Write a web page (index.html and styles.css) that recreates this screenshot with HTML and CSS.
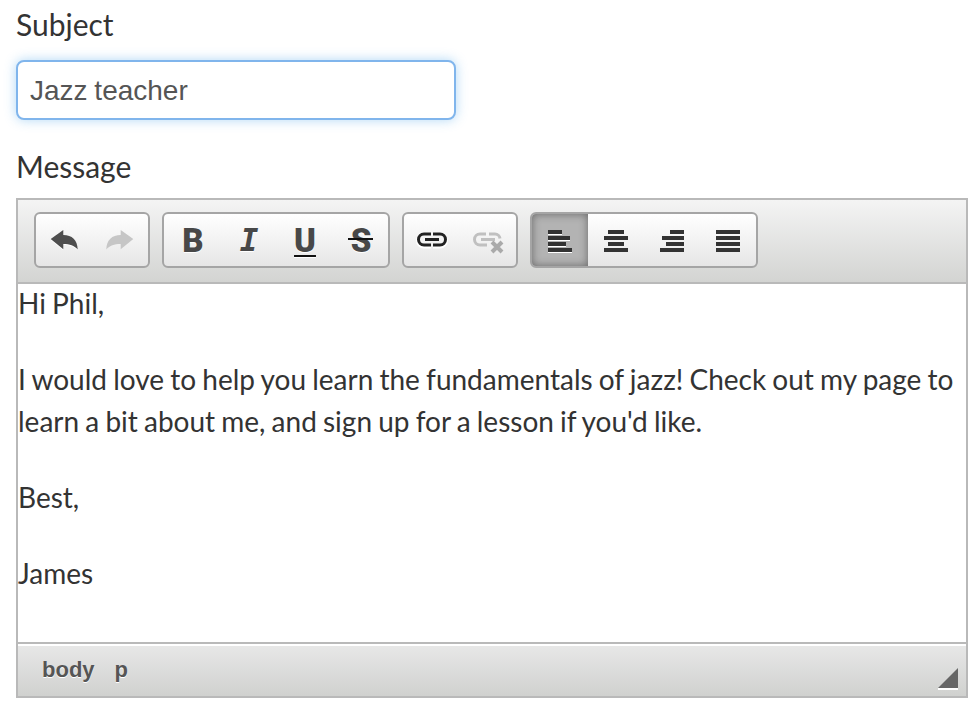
FILE: index.html
```html
<!DOCTYPE html>
<html>
  <head>
    <title>Message</title>
    <link rel="stylesheet" href="styles.css">
  </head>
  <body>
    <div class="form">
      <label class="field-label">Subject</label>
      <input class="subject" type="text" value="Jazz teacher">
      <label class="field-label message-label">Message</label>

      <div class="editor">
        <div class="toolbar">
          <div class="group">
            <div class="tool">
              <svg width="32" height="28" viewBox="0 0 32 28"><path class="glow" d="M2.700 14 L15.300 5 V10 C24 10 29.500 15 29.700 24.500 C26 20.500 22 19 15.300 19 V24.300 Z"/><path class="ink" d="M2.700 13 L15.300 4 V9 C24 9 29.500 14 29.700 23.500 C26 19.500 22 18 15.300 18 V23.300 Z"/></svg>
            </div>
            <div class="tool">
              <svg width="32" height="28" viewBox="0 0 32 28"><path class="ink off" d="M29.300 13 L16.700 4 V9 C8 9 2.500 14 2.300 23.500 C6 19.500 10 18 16.700 18 V23.300 Z"/></svg>
            </div>
          </div>
          <div class="group">
            <div class="tool letter">B</div>
            <div class="tool letter italic">I</div>
            <div class="tool letter under">U</div>
            <div class="tool letter strike">S</div>
          </div>
          <div class="group">
            <div class="tool">
              <svg width="32" height="28" viewBox="0 0 32 28"><path class="link-line white" d="M15 8 H8 A5 5 0 0 0 8 21 H15 M17 8 H24 A5 5 0 0 1 24 21 H17"/><path class="link-line" d="M15 8 H8 A5 5 0 0 0 8 19 H15 M17 8 H24 A5 5 0 0 1 24 19 H17 M9 13.500 H23"/></svg>
            </div>
            <div class="tool">
              <svg width="32" height="28" viewBox="0 0 32 28"><path class="link-line off" d="M14 8 H8 A5 5 0 0 0 8 19 H15 M17 8 H23 A5 5 0 0 1 28 12.500 M9 13.500 H23"/><path class="cross" d="M20 16 L30 26 M30 16 L20 26"/></svg>
            </div>
          </div>
          <div class="group">
            <div class="tool active">
              <svg class="align" width="24" height="24" viewBox="0 0 24 24"><rect class="shine" x="0" y="1" width="14" height="4"/><rect class="stripe" x="0" y="0" width="14" height="4"/><rect class="shine" x="0" y="7" width="22" height="4"/><rect class="stripe" x="0" y="6" width="22" height="4"/><rect class="shine" x="0" y="13" width="18" height="4"/><rect class="stripe" x="0" y="12" width="18" height="4"/><rect class="shine" x="0" y="19" width="24" height="4"/><rect class="stripe" x="0" y="18" width="24" height="4"/></svg>
            </div>
            <div class="tool">
              <svg class="align" width="24" height="24" viewBox="0 0 24 24"><rect class="stripe" x="4" y="0" width="16" height="4"/><rect class="stripe" x="0" y="6" width="24" height="4"/><rect class="stripe" x="4" y="12" width="16" height="4"/><rect class="stripe" x="0" y="18" width="24" height="4"/></svg>
            </div>
            <div class="tool">
              <svg class="align" width="24" height="24" viewBox="0 0 24 24"><rect class="stripe" x="10" y="0" width="14" height="4"/><rect class="stripe" x="2" y="6" width="22" height="4"/><rect class="stripe" x="6" y="12" width="18" height="4"/><rect class="stripe" x="0" y="18" width="24" height="4"/></svg>
            </div>
            <div class="tool">
              <svg class="align" width="24" height="24" viewBox="0 0 24 24"><rect class="stripe" x="0" y="0" width="24" height="4"/><rect class="stripe" x="0" y="6" width="24" height="4"/><rect class="stripe" x="0" y="12" width="24" height="4"/><rect class="stripe" x="0" y="18" width="24" height="4"/></svg>
            </div>
          </div>
        </div>

        <div class="content">
          <p>Hi Phil,</p>
          <p>I would love to help you learn the fundamentals of jazz! Check out my page to learn a bit about me, and sign up for a lesson if you'd like.</p>
          <p>Best,</p>
          <p>James</p>
        </div>

        <div class="statusbar">
          <span class="crumb">body</span>
          <span class="crumb">p</span>
          <svg class="resize" width="20" height="22" viewBox="0 0 20 22"><path d="M20 0 V20 H0 Z" fill="#666"/><rect y="20" width="20" height="2" fill="#fff"/></svg>
        </div>
      </div>
    </div>
  </body>
</html>
```

FILE: styles.css
```css
body {
  margin: 0;
  background-color: white;
  font-family: "Lato", sans-serif;
  color: #333;
}

.form {
  padding: 4px 8px 0 16px;
}

.field-label {
  display: block;
  font-size: 30px;
  line-height: 40px;
  color: #333;
}

.message-label {
  margin-top: 26px;
  margin-bottom: 12px;
}

.subject {
  display: block;
  box-sizing: border-box;
  width: 440px;
  height: 60px;
  margin-top: 16px;
  padding: 2px 12px 0 12px;
  border: 2px solid #80b5ec;
  border-radius: 8px;
  box-shadow: 0 0 12px rgba(82, 168, 236, 0.45);
  outline: none;
  font-family: "Liberation Sans", sans-serif;
  font-size: 28px;
  word-spacing: -1px;
  color: #555;
}

.editor {
  border: 2px solid #b9b9b9;
}

.toolbar {
  display: flex;
  gap: 12px;
  height: 84px;
  box-sizing: border-box;
  padding: 12px 16px;
  background: linear-gradient(#f4f4f4, #d3d4d2);
  border-bottom: 2px solid #b9b9b9;
}

.group {
  display: flex;
  height: 56px;
  box-sizing: border-box;
  border: 2px solid #a5a5a5;
  border-radius: 6px;
  background: linear-gradient(#ffffff, #e6e6e6);
  overflow: hidden;
}

.tool {
  width: 56px;
  display: flex;
  align-items: center;
  justify-content: center;
}

.letter {
  box-sizing: border-box;
  padding-left: 2px;
  font-family: "Roboto", sans-serif;
  font-weight: 900;
  font-size: 33px;
  color: #484848;
  text-shadow: 0 1px 0 #fff;
}

.italic {
  font-family: "DejaVu Sans Mono", monospace;
  font-style: italic;
  font-weight: bold;
  font-size: 31px;
}

.under {
  text-decoration: underline;
  text-decoration-color: #111;
  text-decoration-thickness: 2px;
  text-underline-offset: 3px;
}

.strike {
  position: relative;
}

.strike::after {
  content: "";
  position: absolute;
  left: 16px;
  top: 24px;
  width: 25px;
  height: 2px;
  background-color: #111;
}

.active {
  background-color: #b3b3b3;
  box-shadow: inset 0 0 8px #666;
}

.align {
  margin-top: 4px;
}

.ink {
  fill: #4e4e4e;
}

.ink.off {
  fill: #c6c6c6;
}

.glow {
  fill: #fff;
}

.link-line {
  fill: none;
  stroke: #222;
  stroke-width: 3;
}

.link-line.white {
  stroke: #fff;
}

.link-line.off {
  stroke: #c0c0c0;
}

.cross {
  stroke: #aaa;
  stroke-width: 4;
}

.stripe {
  fill: #333;
}

.shine {
  fill: #fff;
}

.content {
  display: flow-root;
  height: 358px;
  background-color: white;
  font-size: 28px;
  word-spacing: -1px;
  color: #333;
}

.content p {
  margin: 0 0 34px 0;
  line-height: 42px;
}

.content p:first-child {
  margin-top: -2px;
}

.statusbar {
  display: flex;
  align-items: center;
  gap: 20px;
  height: 54px;
  box-sizing: border-box;
  padding: 0 8px 0 24px;
  background: linear-gradient(#e8e8e8, #d0d1cf);
  border-top: 2px solid #b9b9b9;
  box-shadow: inset 0 2px 0 #fff;
  font-family: "Liberation Sans", sans-serif;
  font-weight: bold;
  font-size: 22px;
  color: #555;
}

.crumb {
  text-shadow: 0 1px 0 #fff;
}

.resize {
  margin-left: auto;
  margin-top: 18px;
}
```
